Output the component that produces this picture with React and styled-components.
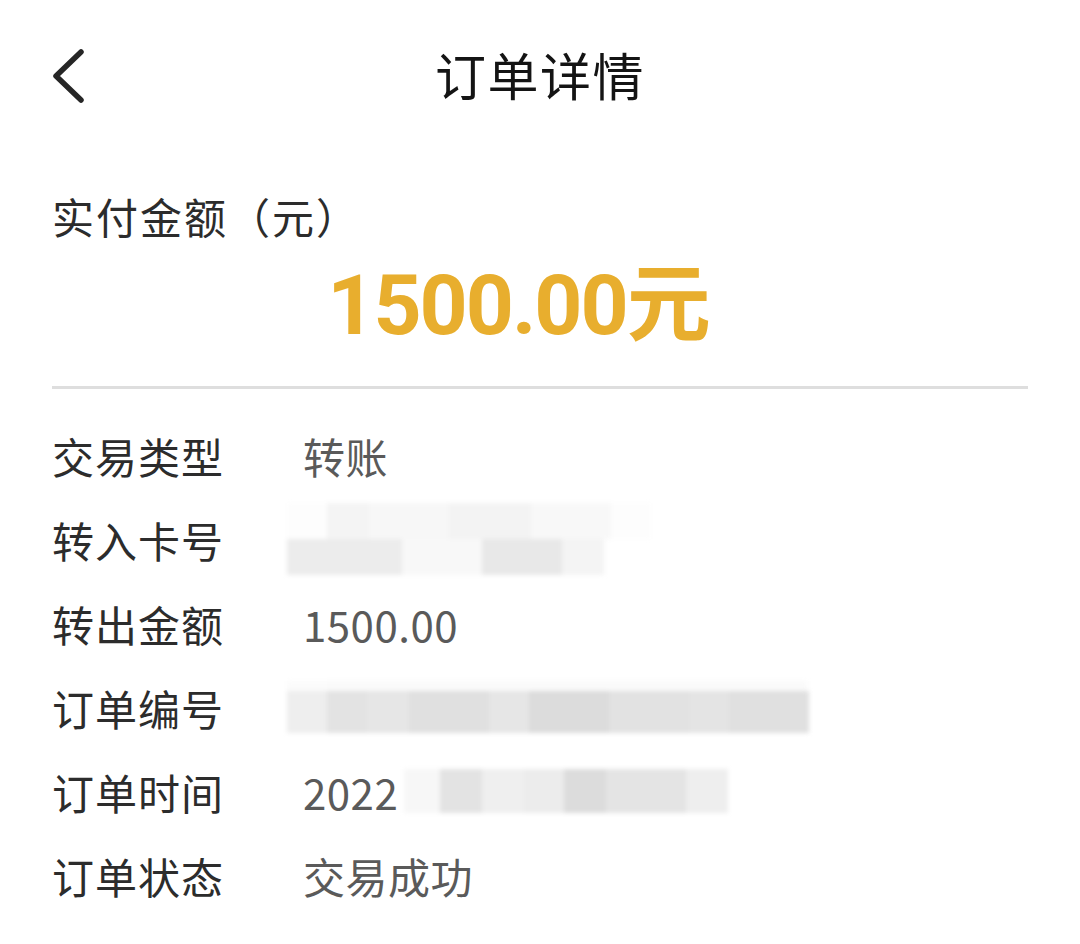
import React from "react";
import styled, { createGlobalStyle } from "styled-components";

const Global = createGlobalStyle`
  html, body {
    margin: 0;
    padding: 0;
    background: #fff;
  }
  body {
    font-family: "Noto Sans CJK SC", "Noto Sans", sans-serif;
  }
`;

const Page = styled.div`
  width: 1080px;
  height: 944px;
  background: #fff;
  overflow: hidden;
`;

const Header = styled.div`
  position: relative;
  height: 150px;
  display: flex;
  align-items: center;
  justify-content: center;
`;

const BackButton = styled.div`
  position: absolute;
  left: 48px;
  top: 48px;
  width: 40px;
  height: 56px;
  display: flex;
  align-items: center;
  justify-content: center;
`;

const Title = styled.div`
  font-size: 51px;
  color: #141414;
  line-height: 1;
  margin-top: -2px;
  letter-spacing: 1.5px;
`;

const Summary = styled.div`
  padding: 36px 52px 0 52px;
`;

const SummaryLabel = styled.div`
  font-size: 42px;
  line-height: 60px;
  color: #2c2c2c;
  letter-spacing: 2px;
`;

const Amount = styled.div`
  text-align: center;
  padding-right: 44px;
  font-family: Roboto, "Noto Sans CJK SC", sans-serif;
  font-weight: 700;
  font-size: 84px;
  line-height: 96px;
  color: #e8ae2e;
  letter-spacing: -2px;
  margin-top: 12px;
`;

const Divider = styled.div`
  height: 3px;
  background: #dedede;
  margin: 32px 52px 0 52px;
`;

const List = styled.div`
  padding: 24px 52px 0 52px;
`;

const Row = styled.div`
  display: flex;
  align-items: center;
  height: 84px;
`;

const Label = styled.div`
  width: 251px;
  flex-shrink: 0;
  font-size: 42px;
  color: #2c2c2c;
  letter-spacing: 1px;
`;

const Value = styled.div`
  display: flex;
  align-items: center;
  font-size: 42px;
  color: #5a5a5a;
  letter-spacing: 0.5px;
`;

const Mosaic = styled.div`
  display: flex;
  flex-direction: column;
  margin-left: ${(p) => p.offset || 0}px;
  filter: blur(2px);
`;

const MosaicLine = styled.div`
  display: flex;
  height: ${(p) => p.h}px;
`;

const Cell = styled.div`
  width: ${(p) => p.w}px;
  height: 100%;
  background: ${(p) => p.c};
`;

function Pixelated({ lines, offset }) {
  return (
    <Mosaic offset={offset}>
      {lines.map((line, i) => (
        <MosaicLine key={i} h={line.h}>
          {line.cells.map(([w, c], j) => (
            <Cell key={j} w={w} c={c} />
          ))}
        </MosaicLine>
      ))}
    </Mosaic>
  );
}

const cardLines = [
  {
    h: 36,
    cells: [
      [40, "#fdfdfd"],
      [42, "#f4f4f4"],
      [80, "#f7f7f7"],
      [82, "#f3f3f3"],
      [80, "#f8f8f8"],
      [40, "#fdfdfd"],
    ],
  },
  {
    h: 36,
    cells: [
      [115, "#ececec"],
      [80, "#f8f8f8"],
      [80, "#e8e8e8"],
      [42, "#f4f4f4"],
    ],
  },
];

const orderLines = [
  {
    h: 10,
    cells: [
      [40, "#fbfbfb"],
      [480, "#fafafa"],
    ],
  },
  {
    h: 42,
    cells: [
      [40, "#eeeeee"],
      [40, "#e3e3e3"],
      [42, "#e6e6e6"],
      [80, "#e0e0e0"],
      [40, "#e6e6e6"],
      [80, "#dcdcdc"],
      [80, "#e2e2e2"],
      [40, "#e4e4e4"],
      [80, "#e0e0e0"],
    ],
  },
];

const timeLines = [
  {
    h: 44,
    cells: [
      [36, "#f7f7f7"],
      [42, "#e3e3e3"],
      [42, "#efefef"],
      [40, "#ececec"],
      [42, "#dcdcdc"],
      [80, "#e4e4e4"],
      [42, "#eeeeee"],
    ],
  },
];

function BackIcon() {
  return (
    <svg width="40" height="56" viewBox="0 0 40 56">
      <path
        d="M33 4 L8 28 L33 52"
        fill="none"
        stroke="#262626"
        strokeWidth="5.5"
        strokeLinecap="round"
        strokeLinejoin="round"
      />
    </svg>
  );
}

export default function App() {
  return (
    <Page>
      <Global />
      <Header>
        <BackButton>
          <BackIcon />
        </BackButton>
        <Title>订单详情</Title>
      </Header>

      <Summary>
        <SummaryLabel>实付金额（元）</SummaryLabel>
        <Amount>1500.00元</Amount>
      </Summary>

      <Divider />

      <List>
        <Row>
          <Label>交易类型</Label>
          <Value>转账</Value>
        </Row>
        <Row>
          <Label>转入卡号</Label>
          <Value>
            <Pixelated lines={cardLines} offset={-16} />
          </Value>
        </Row>
        <Row>
          <Label>转出金额</Label>
          <Value>1500.00</Value>
        </Row>
        <Row>
          <Label>订单编号</Label>
          <Value>
            <Pixelated lines={orderLines} offset={-16} />
          </Value>
        </Row>
        <Row>
          <Label>订单时间</Label>
          <Value>
            2022
            <Pixelated lines={timeLines} offset={6} />
          </Value>
        </Row>
        <Row>
          <Label>订单状态</Label>
          <Value>交易成功</Value>
        </Row>
      </List>
    </Page>
  );
}
